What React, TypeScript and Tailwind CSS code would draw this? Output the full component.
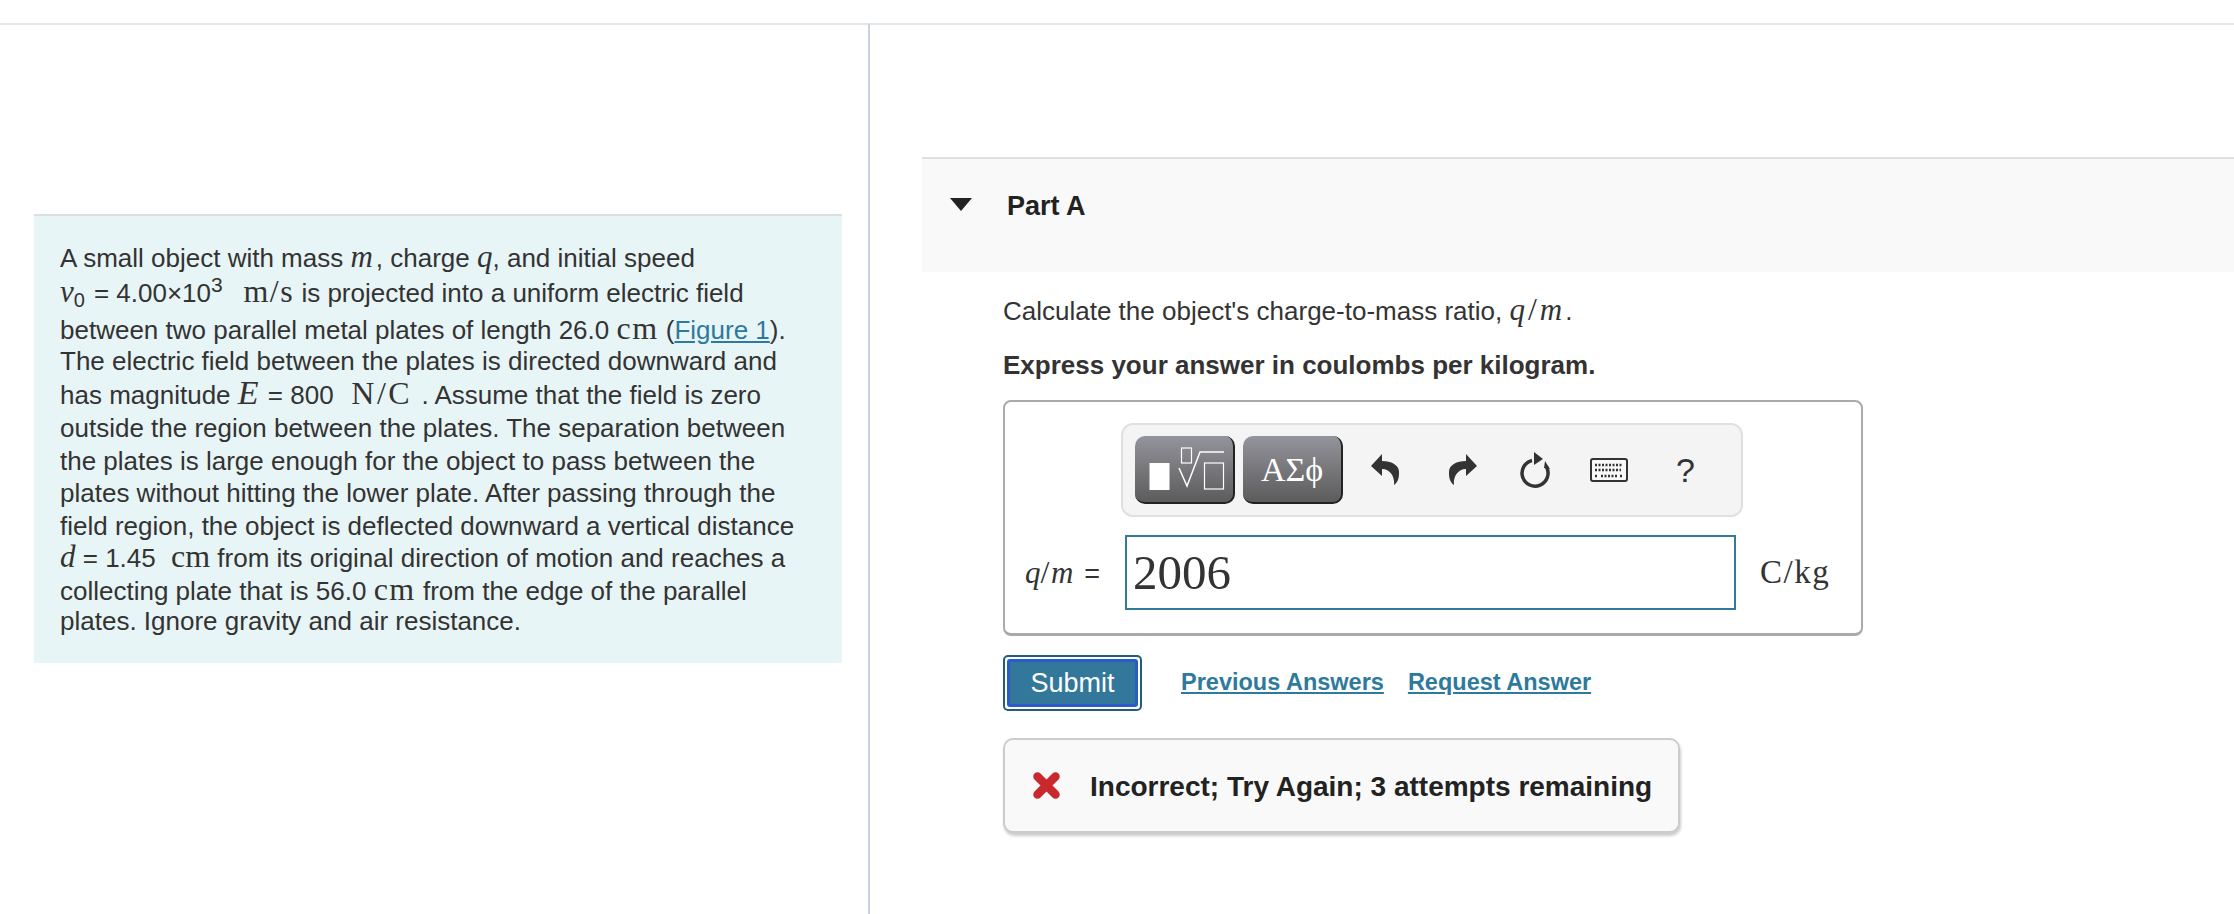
const sans = { fontFamily: '"Liberation Sans", Arial, sans-serif' };

function V({ children }: { children: React.ReactNode }) {
	return <span className="font-['Liberation_Serif',serif] text-[31px] italic">{children}</span>;
}

function M() {
	return <span className="font-['Liberation_Serif',serif] text-[31px] tracking-[3px] italic">m</span>;
}

function U({ children }: { children: React.ReactNode }) {
	return <span className="font-['Liberation_Serif',serif] text-[32px] tracking-[1.5px]">{children}</span>;
}

function Line({ children, className = "" }: { children: React.ReactNode; className?: string }) {
	return <div className={`h-[31px] whitespace-nowrap ${className}`}>{children}</div>;
}

function Toolbar() {
	return (
		<div className="ml-[116px] flex h-[94px] w-[622px] items-center rounded-[12px] border-2 border-[#e0e0e0] bg-[#f4f4f4] pl-[12px]">
			<div className="h-[68px] w-[100px] rounded-[10px] border-r-2 border-b-2 border-[#222] bg-gradient-to-b from-[#94949c] to-[#5c5c5c]">
				<svg width="98" height="66" viewBox="0 0 98 66" fill="none">
					<rect x="14.5" y="27" width="20" height="27" fill="#fff" />
					<rect x="46.5" y="12" width="10" height="15" stroke="#fff" strokeWidth="1.2" />
					<path d="M44 32 L52 50 L65 16 H89" stroke="#fff" strokeWidth="1.5" />
					<rect x="69.5" y="27" width="19" height="26" stroke="#fff" strokeWidth="1.2" />
				</svg>
			</div>
			<div className="ml-[8px] flex h-[68px] w-[100px] items-center justify-center rounded-[10px] border-r-2 border-b-2 border-[#222] bg-gradient-to-b from-[#94949c] to-[#5c5c5c] font-['Liberation_Serif',serif] text-[34px] text-white">
				ΑΣϕ
			</div>
			<svg className="ml-[28px]" width="28" height="32" viewBox="0 0 28 32">
				<path d="M0 12 L11 0 V7 C22 7 29 12 28 20 C28 25 26 29 23 31 C24 24 20 15 11 15 V22 Z" fill="#333" />
			</svg>
			<svg className="ml-[50px]" width="28" height="32" viewBox="0 0 28 32">
				<path d="M28 12 L17 0 V7 C6 7 -1 12 0 20 C0 25 2 29 5 31 C4 24 8 15 17 15 V22 Z" fill="#333" />
			</svg>
			<svg className="ml-[42px]" width="32" height="36" viewBox="0 0 32 36" fill="none">
				<path d="M13 8.5 A13 13 0 1 0 27.5 15" stroke="#333" strokeWidth="3.5" />
				<path d="M15 0 L24 7 L15 13 Z" fill="#333" />
				<path d="M26 9 L31 17 L25 16 Z" fill="#333" />
			</svg>
			<svg className="ml-[39px]" width="38" height="24" viewBox="0 0 38 24" fill="none">
				<rect x="1" y="1" width="36" height="22" rx="2" fill="#f8f8f8" stroke="#333" strokeWidth="2" />
				<path d="M5 7 H33 M5 12 H31 M5 18 H8 M11 18 H27 M30 18 H33" stroke="#333" strokeWidth="2.5" strokeDasharray="2 1.5" />
			</svg>
			<div className="ml-[48px] text-[34px] leading-none text-[#333]" style={sans}>?</div>
		</div>
	);
}

export default function App() {
	return (
		<div className="flex h-screen overflow-hidden bg-white pt-[23px] text-[#333]" style={sans}>
			<div className="h-full w-[870px] shrink-0 border-t-2 border-r-2 border-t-[#e3e6ea] border-r-[#c6d3de] pt-[189px] pr-[26px] pl-[34px]">
				<div className="h-[449px] border-t-2 border-[#dcdfe0] bg-[#e8f5f6] pt-[25px] pl-[26px] text-[26px] leading-[31px]">
					<Line>A small object with mass <M />, charge <V>q</V>, and initial speed</Line>
					<Line className="mt-[4px]">
						<V>v</V><sub className="mr-[9px] text-[20px]">0</sub>= 4.00×10<sup className="mr-[4px] text-[21px]">3</sup> <U>&nbsp;m/s</U> is projected into a uniform electric field
					</Line>
					<Line className="mt-[6px]">between two parallel metal plates of length 26.0 <U>cm</U> (<a className="text-[#2e7a9c] underline">Figure 1</a>).</Line>
					<Line className="mt-[2px]">The electric field between the plates is directed downward and</Line>
					<Line>has magnitude <span className="font-['Liberation_Serif',serif] text-[34px] tracking-[2px] italic">E</span> = 800 <span className="mr-[2px] font-['Liberation_Serif',serif] text-[32px] tracking-[2.5px]">&nbsp;N/C</span> . Assume that the field is zero</Line>
					<Line className="mt-[5px]">outside the region between the plates. The separation between</Line>
					<Line className="mt-[2px]">the plates is large enough for the object to pass between the</Line>
					<Line className="mt-[1px]">plates without hitting the lower plate. After passing through the</Line>
					<Line className="mt-[2px]">field region, the object is deflected downward a vertical distance</Line>
					<Line className="-mt-[1px]"><V>d</V> = 1.45 <span className="font-['Liberation_Serif',serif] text-[32px]">&nbsp;cm</span> from its original direction of motion and reaches a</Line>
					<Line className="mt-[2px]">collecting plate that is 56.0 <U>cm</U> from the edge of the parallel</Line>
					<Line className="mt-[1px]">plates. Ignore gravity and air resistance.</Line>
				</div>
			</div>
			<div className="h-full min-w-0 flex-1 border-t-2 border-[#e3e6ea] pt-[132px] pl-[52px]">
				<div className="flex h-[115px] items-start border-t-2 border-[#e0e0e0] bg-[#f9f9f9] pt-[31px] text-[27px] leading-[32px] font-bold text-[#222]">
					<svg className="mt-[8px] ml-[28px]" width="22" height="13" viewBox="0 0 22 13">
						<path d="M0 0 H22 L11 13 Z" fill="#222" />
					</svg>
					<span className="ml-[35px]">Part A</span>
				</div>
				<div className="pl-[81px]">
					<p className="mt-[23px] h-[32px] text-[26px] leading-[28px]">
						Calculate the object's charge-to-mass ratio, <V>q</V><span className="mx-[3px] font-['Liberation_Serif',serif] text-[32px]">/</span><M />.
					</p>
					<p className="mt-[22px] h-[32px] text-[26px] leading-[32px] font-bold">Express your answer in coulombs per kilogram.</p>
					<div className="mt-[19px] h-[236px] w-[860px] rounded-[8px] border-2 border-b-[3px] border-[#aaa] pt-[21px]">
						<Toolbar />
						<div className="mt-[18px] flex items-center">
							<span className="ml-[20px] w-[84px] text-[24px] whitespace-nowrap"><V>q</V><U>/</U><M /><span className="ml-[8px] text-[27px]">=</span></span>
							<div className="ml-[16px] flex h-[75px] w-[611px] items-center border-2 border-[#337a9c] pl-[6px] font-['Liberation_Serif',serif] text-[49px] leading-none">
								2006
							</div>
							<span className="ml-[24px] font-['Liberation_Serif',serif] text-[33px] tracking-[1.5px]">C/kg</span>
						</div>
					</div>
					<div className="mt-[19px] flex items-center">
						<button type="button" className="h-[56px] w-[139px] rounded-[5px] border-2 border-[#1f6078] bg-white p-[2px]">
							<span className="flex h-full w-full items-center justify-center rounded-[3px] border-[3px] border-[#2a5bc8] bg-[#33789a] text-[27px] text-white">Submit</span>
						</button>
						<a className="ml-[39px] text-[23.5px] font-bold text-[#2e7a9c] underline">Previous Answers</a>
						<a className="ml-[24px] text-[23.5px] font-bold text-[#2e7a9c] underline">Request Answer</a>
					</div>
					<div className="mt-[27px] flex h-[95px] w-[677px] items-center rounded-[10px] border-2 border-[#ccc] bg-[#f9f9f9] pl-[28px] shadow-[1px_3px_3px_rgba(0,0,0,0.2)]">
						<svg width="27" height="27" viewBox="0 0 27 27">
							<path d="M4.5 4.5 L22.5 22.5 M22.5 4.5 L4.5 22.5" stroke="#c9282d" strokeWidth="8.5" strokeLinecap="round" />
						</svg>
						<span className="ml-[30px] pt-[2px] text-[28px] font-bold whitespace-nowrap text-[#222]">Incorrect; Try Again; 3 attempts remaining</span>
					</div>
				</div>
			</div>
		</div>
	);
}
